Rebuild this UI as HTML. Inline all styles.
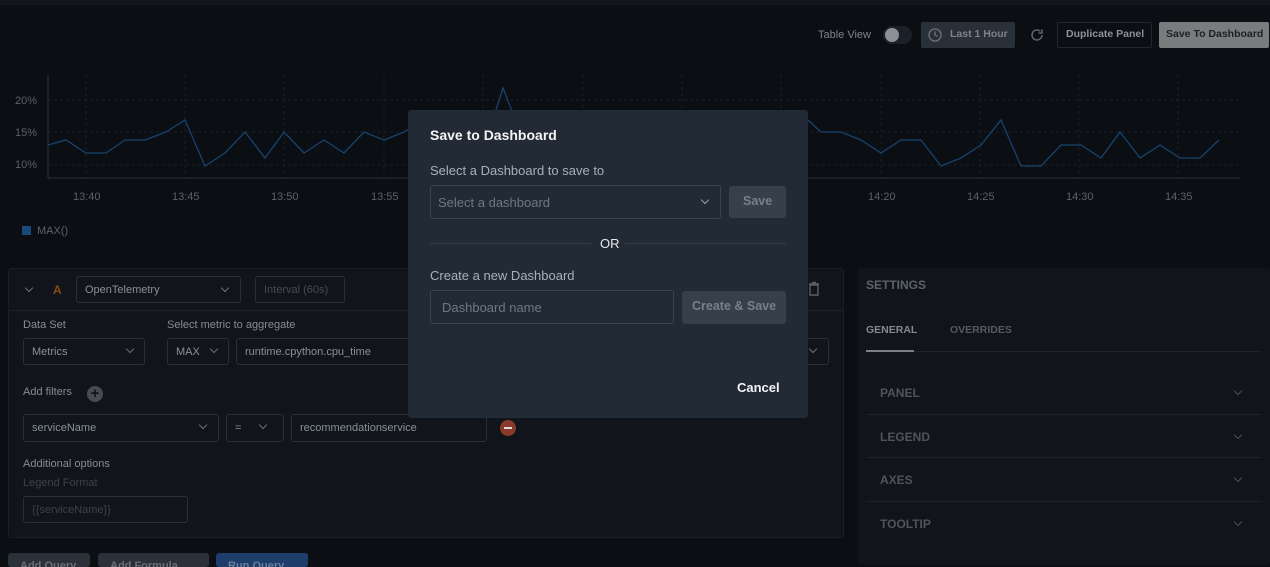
<!DOCTYPE html>
<html><head><meta charset="utf-8"><style>
*{box-sizing:border-box;margin:0;padding:0}
body{width:1270px;height:565px;overflow:hidden;background:#0b0e13;font-family:"Liberation Sans",sans-serif;position:relative;color:#8a8f96}
.a{position:absolute}
.box{position:absolute;border:1px solid #2a2f37;border-radius:3px;font-size:11px;color:#8a9098;padding-left:8px;display:flex;align-items:center}
.chev{position:absolute;width:6px;height:6px;border-right:1.3px solid #6b7078;border-bottom:1.3px solid #6b7078;transform:rotate(45deg)}
.t{position:absolute;font-size:11px;white-space:nowrap}
</style></head><body>
<div class="a" style="left:0;top:0;width:1270px;height:5px;background:#12161c"></div>
<!-- toolbar -->
<div class="t" style="left:818px;top:29px;color:#7f848b">Table View</div>
<div class="a" style="left:883px;top:26px;width:29px;height:18px;border-radius:9px;background:#1c2129"></div>
<div class="a" style="left:885px;top:28px;width:14px;height:14px;border-radius:7px;background:#8d9096"></div>
<div class="a" style="left:921px;top:22px;width:94px;height:26px;border-radius:2px;background:#2a3038"></div>
<svg class="a" style="left:927px;top:27px" width="16" height="16"><circle cx="8" cy="8" r="6" fill="none" stroke="#6e747b" stroke-width="1.3"/><path d="M8 4.5V8l2.5 1.5" fill="none" stroke="#6e747b" stroke-width="1.3"/></svg>
<div class="t" style="left:950px;top:28px;color:#7d838a;font-weight:bold;font-size:10.5px">Last 1 Hour</div>
<svg class="a" style="left:1029px;top:27px" width="16" height="16"><path d="M13 8a5 5 0 1 1-1.6-3.7" fill="none" stroke="#5e646b" stroke-width="1.5"/><path d="M13 2.5v3.5h-3.5" fill="none" stroke="#5e646b" stroke-width="1.5"/></svg>
<div class="a" style="left:1057px;top:22px;width:95px;height:26px;border:1px solid #22272e;border-radius:2px"></div>
<div class="t" style="left:1066px;top:28px;color:#8d9298;font-weight:bold;font-size:10.5px">Duplicate Panel</div>
<div class="a" style="left:1159px;top:22px;width:110px;height:26px;border-radius:2px;background:#7a7b7d"></div>
<div class="t" style="left:1166px;top:28px;color:#1d1f22;font-weight:bold;font-size:10.5px">Save To Dashboard</div>
<!-- chart -->
<svg class="a" style="left:0;top:0" width="1270" height="250">
<g stroke="#1b2027" stroke-dasharray="3,3" stroke-width="1">
<line x1="48" y1="100" x2="1240" y2="100"/><line x1="48" y1="132" x2="1240" y2="132"/><line x1="48" y1="165" x2="1240" y2="165"/>
<line x1="86" y1="75" x2="86" y2="178"/><line x1="185" y1="75" x2="185" y2="178"/><line x1="284" y1="75" x2="284" y2="178"/><line x1="384" y1="75" x2="384" y2="178"/><line x1="483" y1="75" x2="483" y2="178"/><line x1="583" y1="75" x2="583" y2="178"/><line x1="682" y1="75" x2="682" y2="178"/><line x1="781" y1="75" x2="781" y2="178"/><line x1="881" y1="75" x2="881" y2="178"/><line x1="980" y1="75" x2="980" y2="178"/><line x1="1079" y1="75" x2="1079" y2="178"/><line x1="1178" y1="75" x2="1178" y2="178"/>
</g>
<line x1="48" y1="75" x2="48" y2="178" stroke="#2c3138"/><line x1="48" y1="178" x2="1240" y2="178" stroke="#2c3138"/>
<polyline fill="none" stroke="#17436f" stroke-width="1.3" points="48,145 66,140 86,153 106,153 125,140 145,140 166,132 185,120 205,166 225,153 245,132 265,158 284,132 304,153 324,140 344,153 364,132 384,140 404,132 424,120 444,140 463,132 483,150 503,88 523,140 543,132 563,150 583,140 602,132 622,145 642,140 662,132 682,150 702,140 722,132 742,145 762,140 782,132 802,125 808,120 821,132 841,132 861,140 881,153 901,140 921,140 941,166 961,158 981,145 1001,120 1021,166 1041,166 1061,145 1081,145 1101,158 1120,132 1140,158 1160,145 1180,158 1200,158 1219,140"/>
<g fill="#5d6268" font-size="11" font-family="Liberation Sans">
<text x="15" y="104">20%</text><text x="15" y="136">15%</text><text x="15" y="168">10%</text>
<text x="73" y="200">13:40</text><text x="172" y="200">13:45</text><text x="271" y="200">13:50</text><text x="371" y="200">13:55</text>
<text x="868" y="200">14:20</text><text x="967" y="200">14:25</text><text x="1066" y="200">14:30</text><text x="1165" y="200">14:35</text>
<text x="37" y="234">MAX()</text></g>
<rect x="22" y="226" width="9" height="9" fill="#1a4a7a"/>
</svg>
<!-- query panel -->
<div class="a" style="left:8px;top:268px;width:836px;height:270px;background:#11151b;border:1px solid #1a1e25;border-radius:3px"></div>
<div class="a" style="left:9px;top:310px;width:834px;height:1px;background:#1e232a"></div>
<div class="chev" style="left:26px;top:285px"></div>
<div class="t" style="left:53px;top:283px;color:#8a4a10;font-weight:bold;font-size:12px">A</div>
<div class="box" style="left:76px;top:276px;width:165px;height:27px">OpenTelemetry</div><div class="chev" style="left:222px;top:285px"></div>
<div class="box" style="left:255px;top:276px;width:90px;height:27px;color:#454a51">Interval (60s)</div>
<svg class="a" style="left:807px;top:281px" width="14" height="16"><path d="M3 4h8v10H3zM2 3h10M5 1.5h4" fill="none" stroke="#5a5f66" stroke-width="1.4"/></svg>
<div class="t" style="left:23px;top:319px;color:#878c93">Data Set</div>
<div class="t" style="left:167px;top:319px;color:#878c93">Select metric to aggregate</div>
<div class="box" style="left:23px;top:338px;width:122px;height:27px">Metrics</div><div class="chev" style="left:127px;top:346px"></div>
<div class="box" style="left:167px;top:338px;width:62px;height:27px">MAX</div><div class="chev" style="left:211px;top:346px"></div>
<div class="box" style="left:236px;top:338px;width:200px;height:27px;border-right:none">runtime.cpython.cpu_time</div>
<div class="a" style="left:770px;top:338px;width:59px;height:27px;border:1px solid #2a2f37;border-radius:3px"></div><div class="chev" style="left:810px;top:346px"></div>
<div class="t" style="left:23px;top:386px;color:#878c93">Add filters</div>
<div class="a" style="left:87px;top:386px;width:16px;height:16px;border-radius:8px;background:#474c53;color:#111;font-size:15px;line-height:15px;text-align:center;font-weight:bold">+</div>
<div class="box" style="left:23px;top:414px;width:196px;height:28px">serviceName</div><div class="chev" style="left:200px;top:422px"></div>
<div class="box" style="left:226px;top:414px;width:58px;height:28px">=</div><div class="chev" style="left:260px;top:422px"></div>
<div class="box" style="left:291px;top:414px;width:196px;height:28px">recommendationservice</div>
<div class="a" style="left:500px;top:420px;width:16px;height:16px;border-radius:8px;background:#8a3a2a"></div><div class="a" style="left:504px;top:427px;width:8px;height:2px;background:#ddd"></div>
<div class="t" style="left:23px;top:458px;color:#878c93">Additional options</div>
<div class="t" style="left:23px;top:477px;color:#3d4248">Legend Format</div>
<div class="box" style="left:23px;top:496px;width:165px;height:27px;color:#3d4248">{{serviceName}}</div>
<div class="a" style="left:8px;top:553px;width:82px;height:14px;border-radius:3px;background:#2b3138;overflow:hidden"><span class="t" style="left:12px;top:7px;color:#6a7077;font-weight:bold">Add Query</span></div>
<div class="a" style="left:98px;top:553px;width:111px;height:14px;border-radius:3px;background:#2b3138;overflow:hidden"><span class="t" style="left:12px;top:7px;color:#6a7077;font-weight:bold">Add Formula</span></div>
<div class="a" style="left:216px;top:553px;width:92px;height:14px;border-radius:3px;background:#1f3d6a;overflow:hidden"><span class="t" style="left:12px;top:7px;color:#6a7f99;font-weight:bold">Run Query</span></div>
<!-- settings -->
<div class="a" style="left:858px;top:268px;width:412px;height:297px;background:#11151b;border-radius:3px"></div>
<div class="t" style="left:866px;top:278px;font-size:12px;font-weight:bold;color:#5d6268">SETTINGS</div>
<div class="t" style="left:866px;top:324px;font-weight:bold;color:#85898f;font-size:10.5px">GENERAL</div>
<div class="t" style="left:950px;top:324px;font-weight:bold;color:#545a60;font-size:10.5px">OVERRIDES</div>
<div class="a" style="left:866px;top:351px;width:396px;height:1px;background:#1e232a"></div>
<div class="a" style="left:866px;top:350px;width:48px;height:2px;background:#7c8086"></div>
<div class="t" style="left:880px;top:386px;font-size:12px;font-weight:bold;color:#4f545a">PANEL</div>
<div class="t" style="left:880px;top:430px;font-size:12px;font-weight:bold;color:#4f545a">LEGEND</div>
<div class="t" style="left:880px;top:473px;font-size:12px;font-weight:bold;color:#4f545a">AXES</div>
<div class="t" style="left:880px;top:517px;font-size:12px;font-weight:bold;color:#4f545a">TOOLTIP</div>
<div class="chev" style="left:1235px;top:388px;border-color:#4a4f55"></div>
<div class="chev" style="left:1235px;top:432px;border-color:#4a4f55"></div>
<div class="chev" style="left:1235px;top:475px;border-color:#4a4f55"></div>
<div class="chev" style="left:1235px;top:519px;border-color:#4a4f55"></div>
<div class="a" style="left:866px;top:414px;width:396px;height:1px;background:#1e232a"></div>
<div class="a" style="left:866px;top:457px;width:396px;height:1px;background:#1e232a"></div>
<div class="a" style="left:866px;top:501px;width:396px;height:1px;background:#1e232a"></div>
<!-- modal -->
<div class="a" style="left:408px;top:110px;width:400px;height:308px;background:#212a35;border-radius:3px"></div>
<div class="t" style="left:430px;top:127px;font-size:14px;font-weight:bold;color:#f2f3f5">Save to Dashboard</div>
<div class="t" style="left:430px;top:163px;font-size:13px;color:#a9afb7">Select a Dashboard to save to</div>
<div class="a" style="left:430px;top:185px;width:291px;height:34px;border:1px solid #3b4256;border-radius:3px"></div>
<div class="t" style="left:438px;top:195px;font-size:13px;color:#6f7782">Select a dashboard</div>
<div class="chev" style="left:702px;top:197px;border-color:#9aa0a8"></div>
<div class="a" style="left:729px;top:186px;width:57px;height:32px;background:#363f4a;border-radius:3px"></div>
<div class="t" style="left:743px;top:194px;font-size:12.5px;font-weight:bold;color:#78808b">Save</div>
<div class="a" style="left:430px;top:243px;width:161px;height:1px;background:#333c48"></div>
<div class="a" style="left:625px;top:243px;width:161px;height:1px;background:#333c48"></div>
<div class="t" style="left:600px;top:236px;font-size:13px;color:#e9ebee">OR</div>
<div class="t" style="left:430px;top:268px;font-size:13px;color:#a9afb7">Create a new Dashboard</div>
<div class="a" style="left:430px;top:290px;width:244px;height:34px;border:1px solid #3b4256;border-radius:3px"></div>
<div class="t" style="left:442px;top:300px;font-size:13px;color:#6f7782">Dashboard name</div>
<div class="a" style="left:682px;top:291px;width:104px;height:33px;background:#363f4a;border-radius:3px"></div>
<div class="t" style="left:692px;top:299px;font-size:12.5px;font-weight:bold;color:#78808b">Create &amp; Save</div>
<div class="t" style="left:737px;top:380px;font-size:13px;font-weight:bold;color:#f2f3f5">Cancel</div>
</body></html>
